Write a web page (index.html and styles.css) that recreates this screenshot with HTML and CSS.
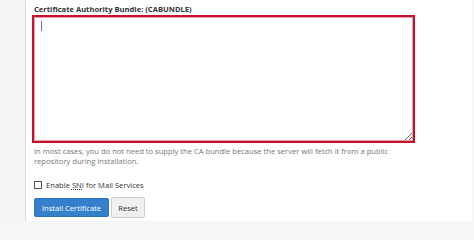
FILE: index.html
```html
<!DOCTYPE html>
<html>
<head>
<meta charset="utf-8">
<link rel="stylesheet" href="styles.css">
</head>
<body>
<div class="page">
  <div class="sidebar"></div>
  <div class="panel">
    <label class="field-label" for="cab">Certificate Authority Bundle: (CABUNDLE)</label>
    <div class="cab-wrap">
      <textarea id="cab" class="cab"></textarea>
      <span class="caret"></span>
    </div>
    <p class="help">In most cases, you do not need to supply the CA bundle because the server will fetch it from a public repository during installation.</p>
    <label class="check"><input type="checkbox" class="box"><span>Enable <abbr title="Server Name Indication">SNI</abbr> for Mail Services</span></label>
    <div class="actions">
      <button class="btn btn-primary">Install Certificate</button>
      <button class="btn btn-default">Reset</button>
    </div>
  </div>
</div>
</body>
</html>
```
FILE: styles.css
```css
html, body {
  margin: 0;
  padding: 0;
  background: #f6f6f6;
  font-family: "Open Sans", "Liberation Sans", sans-serif;
  color: #333;
}
.page {
  display: flex;
  height: 225px;
}
.sidebar {
  width: 25px;
  height: 221px;
  border-right: 1px solid #dcdcdc;
  background: #f5f5f5;
}
.panel {
  width: 438px;
  height: 221px;
  padding-left: 8px;
  background: #fff;
  display: flex;
  flex-direction: column;
  align-items: flex-start;
}
.field-label {
  font-size: 7.6px;
  font-weight: 700;
  line-height: 10px;
  margin: 4px 0 0 0;
  color: #333;
}
.cab-wrap {
  position: relative;
  margin: 1px 0 0 -2px;
  display: flex;
}
.cab {
  box-sizing: border-box;
  width: 383px;
  height: 128px;
  margin: 0;
  border: 2px solid #c8102e;
  box-shadow: inset 0 0 0 1px #e8a0a8;
  border-radius: 0;
  outline: none;
  resize: vertical;
  padding: 4px 6px;
  font-family: "Open Sans", sans-serif;
  font-size: 8px;
  background: #fff;
}
.caret {
  position: absolute;
  left: 9px;
  top: 6px;
  width: 1px;
  height: 10px;
  background: #777;
}
.help {
  margin: 3px 0 0 0;
  font-size: 7.6px;
  line-height: 10px;
  color: #777;
  width: 370px;
}
.check {
  display: flex;
  align-items: center;
  margin-top: 14px;
  font-size: 7.6px;
  line-height: 10px;
  color: #333;
}
.box {
  width: 8px;
  height: 8px;
  margin: 0 4px 0 0;
  appearance: none;
  border: 1px solid #555;
  background: #fff;
  box-sizing: border-box;
}
abbr {
  text-decoration: underline dotted;
}
.actions {
  display: flex;
  gap: 2px;
  margin-top: 8px;
}
.btn {
  font-family: "Open Sans", sans-serif;
  font-size: 7.6px;
  height: 19px;
  border-radius: 2px;
  padding: 0;
  cursor: pointer;
}
.btn-primary {
  background: #3580cc;
  border: 1px solid #2e72b8;
  color: #fff;
  width: 75px;
}
.btn-default {
  background: #f0f0f0;
  border: 1px solid #cfcfcf;
  color: #333;
  width: 34px;
  height: 21px;
  margin-top: -1px;
}
```
